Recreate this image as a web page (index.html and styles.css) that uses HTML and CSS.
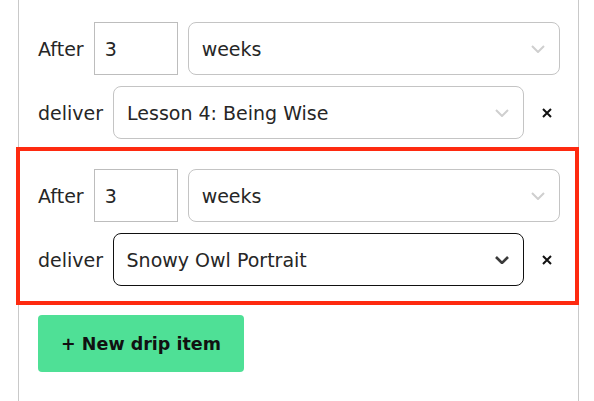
FILE: index.html
```html
<!DOCTYPE html>
<html lang="en">
<head>
<meta charset="utf-8">
<title>Drip items</title>
<link rel="stylesheet" href="styles.css">
</head>
<body>
<div class="card">
  <div class="drip">
    <div class="row">
      <span class="label">After</span>
      <div class="num">3</div>
      <div class="select"><span class="val">weeks</span><svg class="chev" viewBox="0 0 14 8"><path d="M1 1 L7 7 L13 1"/></svg></div>
    </div>
    <div class="row">
      <span class="label">deliver</span>
      <div class="select"><span class="val">Lesson 4: Being Wise</span><svg class="chev" viewBox="0 0 14 8"><path d="M1 1 L7 7 L13 1"/></svg></div>
      <button class="remove" aria-label="Remove"><svg viewBox="0 0 10 10"><path d="M1 1 L9 9 M9 1 L1 9"/></svg></button>
    </div>
  </div>
  <div class="drip active">
    <div class="row">
      <span class="label">After</span>
      <div class="num">3</div>
      <div class="select"><span class="val">weeks</span><svg class="chev" viewBox="0 0 14 8"><path d="M1 1 L7 7 L13 1"/></svg></div>
    </div>
    <div class="row">
      <span class="label">deliver</span>
      <div class="select focused"><span class="val">Snowy Owl Portrait</span><svg class="chev" viewBox="0 0 14 8"><path d="M1 1 L7 7 L13 1"/></svg></div>
      <button class="remove" aria-label="Remove"><svg viewBox="0 0 10 10"><path d="M1 1 L9 9 M9 1 L1 9"/></svg></button>
    </div>
  </div>
  <div class="actions">
    <button class="new-btn">+ New drip item</button>
  </div>
</div>
</body>
</html>
```

FILE: styles.css
```css
html, body {
  margin: 0;
  padding: 0;
  background: #fff;
}
body {
  font-family: "DejaVu Sans", sans-serif;
  font-size: 19px;
  color: #262626;
  height: 401px;
  overflow: hidden;
}
.card {
  margin-left: 18px;
  width: 559px;
  min-height: 401px;
  border-left: 1px solid #c9c9c9;
  border-right: 1px solid #c9c9c9;
}
.drip {
  padding: 22px 18px 0 19px;
  display: flex;
  flex-direction: column;
  gap: 11px;
}
.drip.active {
  margin: 8px -1px 0 -3px;
  border: 4px solid #fe2a10;
  padding: 18px 15px 15px 18px;
}
.row {
  display: flex;
  align-items: center;
  height: 53px;
}
.label {
  margin-right: 10px;
}
.num {
  box-sizing: border-box;
  width: 84px;
  height: 53px;
  border: 1px solid #bdbdbd;
  padding-left: 10px;
  display: flex;
  align-items: center;
  margin-right: 10px;
}
.select {
  flex: 1;
  box-sizing: border-box;
  height: 53px;
  border: 1px solid #c4c4c4;
  border-radius: 8px;
  padding: 0 14px 0 13px;
  display: flex;
  align-items: center;
  justify-content: space-between;
}
.select.focused {
  border: 1.5px solid #111;
  padding-left: 12.5px;
}
.chev {
  width: 14px;
  height: 8px;
  fill: none;
  stroke: #cfcfcf;
  stroke-width: 2;
}
.focused .chev {
  stroke: #3a3a3a;
  stroke-width: 2.6;
}
.remove {
  border: 0;
  background: none;
  padding: 0;
  margin: 0 8px 0 18px;
  width: 10px;
  height: 10px;
  display: flex;
}
.remove svg {
  width: 10px;
  height: 10px;
  fill: none;
  stroke: #111;
  stroke-width: 2;
}
.actions {
  padding: 10px 0 0 19px;
}
.new-btn {
  font-family: inherit;
  font-size: 17.5px;
  font-weight: bold;
  color: #111;
  background: #4fe096;
  border: 0;
  border-radius: 4px;
  width: 206px;
  height: 57px;
  padding: 0;
}
```
